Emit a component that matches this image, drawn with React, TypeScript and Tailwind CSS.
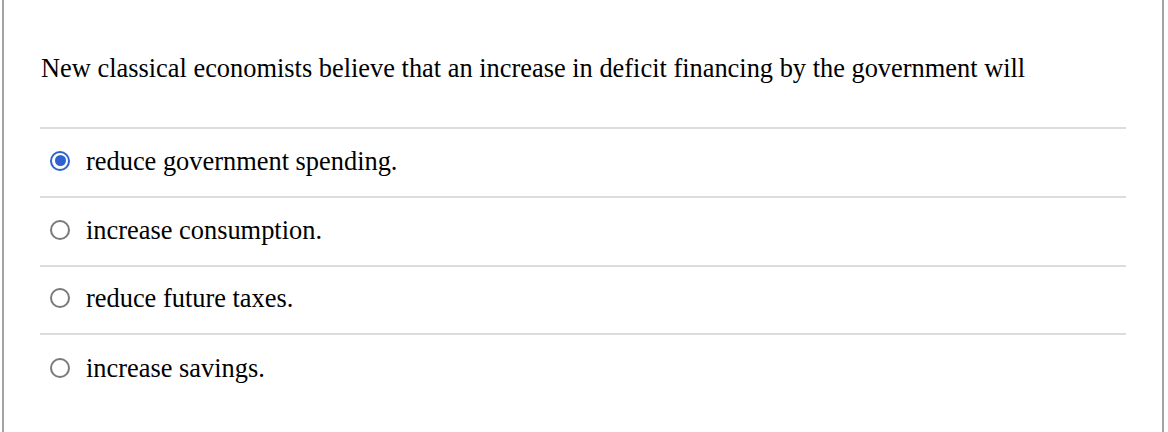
import React from 'react';

const options = [
  'reduce government spending.',
  'increase consumption.',
  'reduce future taxes.',
  'increase savings.',
];

function Radio({ checked }: { checked: boolean }) {
  if (checked) {
    return (
      <span className="flex h-[20px] w-[20px] shrink-0 items-center justify-center rounded-full border-[2px] border-[#2d63d0] bg-white">
        <span className="h-[11px] w-[11px] rounded-full bg-[#2d63d0]" />
      </span>
    );
  }
  return <span className="h-[20px] w-[20px] shrink-0 rounded-full border-[2px] border-[#7a7a7a] bg-white" />;
}

export default function App() {
  const selected = 0;
  return (
    <div className="h-[432px] w-[1168px] bg-white" style={{ fontFamily: '"Liberation Serif", "Times New Roman", serif' }}>
      <div className="ml-[2px] h-full w-[1162px] border-x-2 border-[#a3a3a3] px-[36px] pt-[50px]">
        <p className="ml-[1px] text-[26.4px] leading-[36px] text-black">
          New classical economists believe that an increase in deficit financing by the government will
        </p>
        <div className="mt-[41px] border-t-2 border-[#dcdcdc]">
          {options.map((opt, i) => (
            <div
              key={opt}
              className={
                i === options.length - 1
                  ? 'flex h-[69px] items-center gap-[16px] pb-[4px] pl-[10px]'
                  : i === 2
                    ? 'flex h-[68px] items-center gap-[16px] border-b-2 border-[#dcdcdc] pb-[4px] pl-[10px]'
                    : 'flex h-[69px] items-center gap-[16px] border-b-2 border-[#dcdcdc] pb-[4px] pl-[10px]'
              }
            >
              <Radio checked={i === selected} />
              <span className="text-[26.4px] leading-[36px] text-black">{opt}</span>
            </div>
          ))}
        </div>
      </div>
    </div>
  );
}
